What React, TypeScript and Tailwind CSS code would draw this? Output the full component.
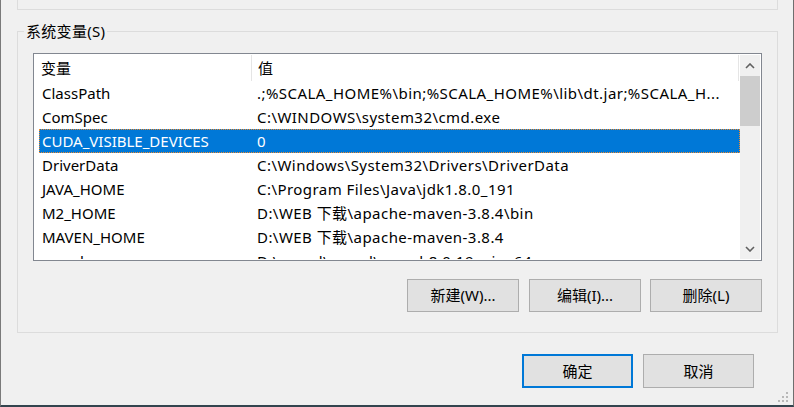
const rows: { name: string; value: string; selected?: boolean }[] = [
    {name: 'ClassPath', value: '.;%SCALA_HOME%\\bin;%SCALA_HOME%\\lib\\dt.jar;%SCALA_H...'},
    {name: 'ComSpec', value: 'C:\\WINDOWS\\system32\\cmd.exe'},
    {name: 'CUDA_VISIBLE_DEVICES', value: '0', selected: true},
    {name: 'DriverData', value: 'C:\\Windows\\System32\\Drivers\\DriverData'},
    {name: 'JAVA_HOME', value: 'C:\\Program Files\\Java\\jdk1.8.0_191'},
    {name: 'M2_HOME', value: 'D:\\WEB 下载\\apache-maven-3.8.4\\bin'},
    {name: 'MAVEN_HOME', value: 'D:\\WEB 下载\\apache-maven-3.8.4'},
    {name: 'mysql', value: 'D:\\mysql\\mysql\\mysql-8.0.19-winx64'},
]

function Chevron({up}: { up?: boolean }) {
    return (
        <svg width="10" height="6" viewBox="0 0 10 6">
            <polyline
                points={up ? '1,5 5,1 9,5' : '1,1 5,5 9,1'}
                fill="none"
                stroke="#606060"
                strokeWidth="1.6"
            />
        </svg>
    )
}

function WinButton({label, w, primary}: { label: string; w: string; primary?: boolean }) {
    return (
        <button
            className={
                primary
                    ? `${w} h-full bg-[#e1e1e1] border-2 border-[#0078d7] text-[15px] text-black`
                    : `${w} h-full bg-[#e1e1e1] border border-[#adadad] text-[15px] text-black`
            }
        >
            {label}
        </button>
    )
}

export default function App() {
    return (
        <div className="relative w-[794px] h-[407px] overflow-hidden bg-[#f0f0f0] border-l border-l-[#7a7a7a] border-r border-r-[#6e6e6e] border-b-2 border-b-[#33444e] font-['Noto_Sans','Noto_Sans_CJK_SC',sans-serif] text-black">
            {/* previous group box, cut off at the top */}
            <div className="ml-[16px] w-[761px] h-[10px] border-x border-b border-[#dcdcdc]"/>

            {/* 系统变量 group */}
            <div className="relative ml-[16px] mt-[21px] w-[761px] h-[302px] border border-[#dcdcdc] pt-[21px] px-[15px] pb-[20px]">
                <span className="absolute left-[6px] top-[-11px] px-[2px] bg-[#f0f0f0] text-[15px] leading-[20px] tracking-[0.3px]">
                    系统变量(S)
                </span>

                <div className="flex h-[208px] border border-[#828790] bg-white p-px">
                    <div className="flex-1 flex flex-col overflow-hidden">
                        <div className="flex h-[26px] shrink-0 text-[15px]">
                            <div className="w-[216px] pl-[6px] pt-[1px] flex items-center">变量</div>
                            <div className="w-px bg-[#e5e5e5]"/>
                            <div className="flex-1 pl-[6px] pt-[1px] flex items-center">值</div>
                            <div className="w-px bg-[#e5e5e5]"/>
                            <div className="w-px"/>
                        </div>
                        {rows.map(r => (
                            <div key={r.name} className="flex h-[24px] shrink-0 pl-[4px] text-[15px]">
                                <div
                                    className={
                                        r.selected
                                            ? 'flex flex-1 items-center bg-[#0078d7] text-white border border-dotted border-[#f08a2c]'
                                            : 'flex flex-1 items-center border border-transparent'
                                    }
                                >
                                    <div className="w-[211px] pl-[2px] whitespace-nowrap">{r.name}</div>
                                    <div className="flex-1 pl-[6px] whitespace-nowrap overflow-hidden tracking-[0.45px]">{r.value}</div>
                                </div>
                            </div>
                        ))}
                    </div>

                    {/* scrollbar */}
                    <div className="w-[20px] flex flex-col bg-[#f0f0f0]">
                        <div className="h-[21px] flex items-center justify-center">
                            <Chevron up/>
                        </div>
                        <div className="h-[50px] bg-[#cdcdcd]"/>
                        <div className="flex-1"/>
                        <div className="h-[21px] flex items-center justify-center">
                            <Chevron/>
                        </div>
                    </div>
                </div>

                <div className="flex justify-end h-[33px] mt-[18px]">
                    <WinButton label="新建(W)..." w="w-[112px]"/>
                    <div className="w-[10px]"/>
                    <WinButton label="编辑(I)..." w="w-[112px]"/>
                    <div className="w-[9px]"/>
                    <WinButton label="删除(L)" w="w-[112px]"/>
                </div>
            </div>

            <div className="flex justify-end gap-[10px] h-[34px] mt-[21px] pr-[39px]">
                <WinButton label="确定" w="w-[111px]" primary/>
                <WinButton label="取消" w="w-[111px]"/>
            </div>

            {/* resize grip */}
            <svg className="absolute right-[3px] bottom-[1px]" width="12" height="12" viewBox="0 0 12 12">
                <rect x="8" y="0" width="2" height="2" fill="#b8b8b8"/>
                <rect x="4" y="4" width="2" height="2" fill="#b8b8b8"/>
                <rect x="8" y="4" width="2" height="2" fill="#b8b8b8"/>
                <rect x="0" y="8" width="2" height="2" fill="#b8b8b8"/>
                <rect x="4" y="8" width="2" height="2" fill="#b8b8b8"/>
                <rect x="8" y="8" width="2" height="2" fill="#b8b8b8"/>
            </svg>
        </div>
    )
}
